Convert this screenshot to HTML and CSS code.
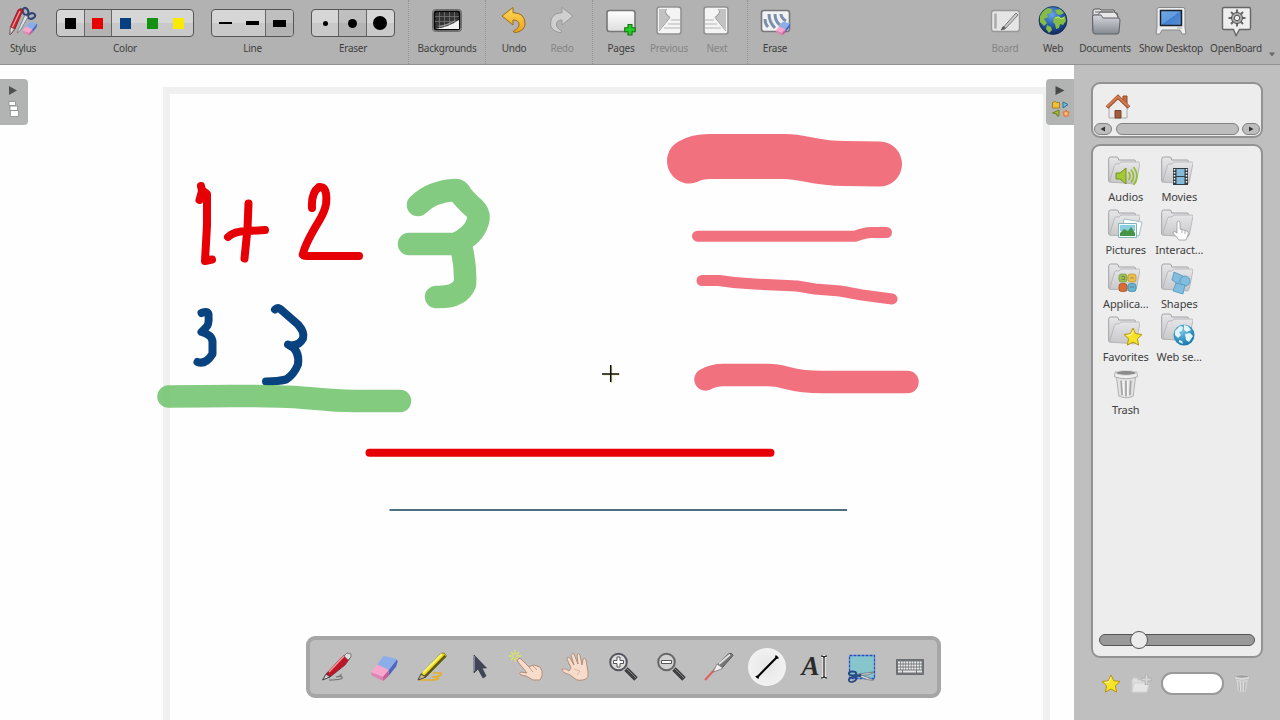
FILE: index.html
```html
<!DOCTYPE html>
<html lang="en">
<head>
  <meta charset="UTF-8">
  <meta name="viewport" content="width=device-width, initial-scale=1.0">
  <title>OpenBoard</title>
  <link rel="stylesheet" href="styles.css">
</head>
<body>
<!-- shared gradients and symbols -->
<svg class="defs" width="0" height="0">
  <defs>
    <linearGradient id="gWhite" x1="0" y1="0" x2="0" y2="1"><stop offset="0" stop-color="#fff"/><stop offset="1" stop-color="#dedede"/></linearGradient>
    <linearGradient id="gFolder" x1="0" y1="0" x2="0" y2="1"><stop offset="0" stop-color="#e6e6e8"/><stop offset="1" stop-color="#c6c6c9"/></linearGradient>
    <linearGradient id="gSteel" x1="0" y1="0" x2="0" y2="1"><stop offset="0" stop-color="#d5d7dc"/><stop offset="1" stop-color="#858991"/></linearGradient>
    <linearGradient id="gGold" x1="0" y1="0" x2="0" y2="1"><stop offset="0" stop-color="#ffd95a"/><stop offset="1" stop-color="#eda21c"/></linearGradient>
    <linearGradient id="gBlue" x1="0" y1="0" x2="1" y2="1"><stop offset="0" stop-color="#75a9e8"/><stop offset=".5" stop-color="#6099df"/><stop offset=".5" stop-color="#427fcb"/><stop offset="1" stop-color="#5991d9"/></linearGradient>
    <radialGradient id="gGlobe" cx=".45" cy=".3" r=".7"><stop offset="0" stop-color="#6ba6e6"/><stop offset=".5" stop-color="#2860b0"/><stop offset="1" stop-color="#10285e"/></radialGradient>
    <radialGradient id="gSky" cx=".4" cy=".3" r=".7"><stop offset="0" stop-color="#75c5e5"/><stop offset="1" stop-color="#1678aa"/></radialGradient>
    <symbol id="folder" viewBox="0 0 32 30">
      <path d="M.7 3.500Q.7 1 2.500 1H9q1.500 0 1.700 3h15.500q1.300 0 1.300 1.500V26H1.500L.7 25z" fill="url(#gFolder)" stroke="#a2a2a5"/>
      <path d="M6.500 9.500Q6.700 8 8 8h3l2-2h17.500q1.600 0 1.400 1.500L28.500 25 27 28 1.500 26z" fill="url(#gFolder)" stroke="#b1b1b4" stroke-width=".8"/>
    </symbol>
    <symbol id="star" viewBox="0 0 20 20">
      <path d="M10 1l2.700 5.700 6.300.8-4.600 4.300 1.200 6.300L10 15l-5.600 3.100 1.200-6.300L1 7.500l6.300-.8z" fill="#f8e426" stroke="#b7960c" stroke-linejoin="round"/>
      <path d="M10 3.500L8.200 7.800l-4.500.7" fill="none" stroke="#fff9b5"/>
    </symbol>
    <symbol id="bin" viewBox="0 0 26 32">
      <path d="M3 7h20l-2.600 21q-7 3.500-14.800 0z" fill="#e2e2e2" stroke="#b0b0b0"/>
      <path d="M8 12l1 15M13 12v16M18 12l-1 15" stroke="#a5a5a5" stroke-width="1.800"/>
      <path d="M9.800 12l1 15M14.800 12v16" stroke="#fff" stroke-width="1"/>
      <path d="M2 3h22l1 5q-12 4-24 0z" fill="#f1f1f1" stroke="#aaa"/>
      <ellipse cx="13" cy="4" rx="10.500" ry="2.500" fill="#8b8b8b" stroke="#ddd"/>
    </symbol>
    <symbol id="eraserIcon" viewBox="0 0 30 30">
      <path d="M2 20L13 6.500l15 2L14.500 25z" fill="#f6a7cb"/>
      <path d="M8.500 12l5.500-7.500q1-1.500 3-1.200L28 6q1.500.5.800 1.500L20.500 17.500z" fill="#8caee6"/>
      <path d="M20.500 17.500L28.800 7q1 .8.700 2.300L28 14l-8 10z" fill="#4d66c3"/>
      <path d="M14.500 24.500l6-7-.5 6.500-5.500 5z" fill="#c65f99"/>
      <path d="M2 20l12.500 4.500v4.500L3 23.500z" fill="#de86b3"/>
    </symbol>
  </defs>
</svg>

<header class="toolbar">
  <div class="tool tool-stylus">
    <svg class="icon" viewBox="0 0 32 32">
      <g fill="none" stroke="#344678" stroke-width="2.200"><ellipse cx="18.500" cy="6.500" rx="2.700" ry="3.700" transform="rotate(-25 18.500 6.500)"/><ellipse cx="24.500" cy="11" rx="3.700" ry="2.700" transform="rotate(-15 24.500 11)"/></g>
      <path d="M18 10l3 2-8 14-3 2 2-5z" fill="#d9e0e6" stroke="#717780" stroke-width=".8"/>
      <path d="M11 5q3-3 5 0L8 24l-5 6 .4-8z" fill="#cc1e2c" stroke="#782027" stroke-width=".8"/>
      <path d="M13 6L5.500 22" stroke="#ff9c9c" stroke-width="1.300"/>
      <path d="M3.400 22l4 2L3 30z" fill="#ddd" stroke="#666" stroke-width=".7"/>
      <use href="#eraserIcon" x="14" y="15" width="17" height="16"/>
    </svg>
    <span>Stylus</span>
  </div>
  <div class="choice choice-color">
    <div class="segments">
      <i><b class="swatch black"></b></i><i class="selected"><b class="swatch red"></b></i><i><b class="swatch blue"></b></i><i><b class="swatch green"></b></i><i><b class="swatch yellow"></b></i>
    </div>
    <span>Color</span>
  </div>
  <div class="choice choice-line">
    <div class="segments">
      <i><b class="stroke thin"></b></i><i><b class="stroke medium"></b></i><i class="selected"><b class="stroke thick"></b></i>
    </div>
    <span>Line</span>
  </div>
  <div class="choice choice-eraser">
    <div class="segments">
      <i><b class="dot small"></b></i><i class="selected"><b class="dot middle"></b></i><i><b class="dot large"></b></i>
    </div>
    <span>Eraser</span>
  </div>
  <div class="group group-background">
    <div class="tool tool-wide">
      <svg class="icon" viewBox="0 0 32 32">
        <rect x="1.500" y="4.500" width="29" height="22" rx="3" fill="#888" stroke="#707070"/>
        <rect x="3.500" y="6.500" width="25" height="18" rx="1.500" fill="#343434" stroke="#080808" stroke-width="1.500"/>
        <path d="M8.500 7v17M13.500 7v17M18.500 7v17M23.500 7v17M4 11.500h24M4 16.500h24" stroke="#757575" stroke-width=".8"/>
        <path d="M4 24q14-2 24-9v9z" fill="#f1f1f1"/><path d="M6 21q10-1 20-7-6 6-16 8z" fill="#999"/>
      </svg>
      <span>Backgrounds</span>
    </div>
  </div>
  <div class="group">
    <div class="tool">
      <svg class="icon" viewBox="0 0 32 32"><path d="M4 11L15 2.500v5.200q12 0 12 11.300 0 6-8.500 8.500-3 .5-3-1.500 6-3 5.500-7-.5-4-6-4v5z" fill="url(#gGold)" stroke="#996b18" stroke-linejoin="round"/></svg>
      <span>Undo</span>
    </div>
    <div class="tool disabled">
      <svg class="icon" viewBox="0 0 32 32"><path d="M27 11L16 2.500v5.200Q4.500 8 4.500 19q0 6 8.500 8.500 3 .5 3-1.500-6-3-5.500-7 .5-4 5.500-4v5z" fill="#cfcfcf" stroke="#999" stroke-linejoin="round"/></svg>
      <span>Redo</span>
    </div>
  </div>
  <div class="group">
    <div class="tool">
      <svg class="icon" viewBox="0 0 32 32">
        <rect x="2" y="5.500" width="28" height="21" rx="2.500" fill="url(#gWhite)" stroke="#777" stroke-width="1.600"/>
        <path d="M23 19.500h4v3.200h3.200v4H27V30h-4v-3.300h-3.300v-4H23z" fill="#25cf25" stroke="#157315" stroke-width="1.100"/>
      </svg>
      <span>Pages</span>
    </div>
    <div class="tool disabled">
      <svg class="icon" viewBox="0 0 32 32">
        <rect x="4" y="2" width="24" height="27" rx="2.500" fill="#f4f4f4" stroke="#929292" stroke-width="1.600"/>
        <path d="M6 4h7q-2 3 1 5l3 3L6 25z" fill="#c2c2c2"/><path d="M6 26l11-13.500L14 10q-3-3-.5-6" fill="none" stroke="#999"/>
        <path d="M18 15h9M15 19h12M11 23h16" stroke="#b5b5b5"/>
      </svg>
      <span>Previous</span>
    </div>
    <div class="tool disabled">
      <svg class="icon" viewBox="0 0 32 32">
        <rect x="3" y="2" width="24" height="27" rx="2.500" fill="#f4f4f4" stroke="#929292" stroke-width="1.600"/>
        <path d="M25 4h-7q2 3-1 5l-3 3 11 13z" fill="#c2c2c2"/><path d="M25 26L14 12.500l3-2.500q3-3 .5-6" fill="none" stroke="#999"/>
        <path d="M4 15h9M4 19h12M4 23h16" stroke="#b5b5b5"/>
      </svg>
      <span>Next</span>
    </div>
  </div>
  <div class="group group-erase">
    <div class="tool">
      <svg class="icon" viewBox="0 0 32 32">
        <rect x="2.500" y="5.500" width="28" height="21" rx="2.500" fill="#f1f2f4" stroke="#777" stroke-width="1.600"/>
        <path d="M6 14q0 5 3 8M10 9q0 8 6 14M16 9q0 7 5 11M22 9q0 4 5 7" stroke="#7c90ac" stroke-width="3" fill="none"/>
        <use href="#eraserIcon" x="15" y="15" width="17" height="16"/>
      </svg>
      <span>Erase</span>
    </div>
  </div>
  <nav class="modes">
    <div class="tool disabled">
      <svg class="icon" viewBox="0 0 32 32">
        <rect x="2.500" y="5.500" width="28" height="21" rx="2.500" fill="#e5e5e5" stroke="#999" stroke-width="1.400"/>
        <path d="M6.500 8.500v15" stroke="#aaa" stroke-width="2.500"/><path d="M12 25L27 8l2 2-13 14z" fill="#ccc" stroke="#777"/><path d="M12 25l2-4 3 2z" fill="#555"/>
      </svg>
      <span>Board</span>
    </div>
    <div class="tool">
      <svg class="icon" viewBox="0 0 32 32">
        <circle cx="16" cy="15.500" r="14" fill="url(#gGlobe)" stroke="#183057" stroke-width=".8"/>
        <path d="M3 11q3-6 8-8l4 1-1 4-4 1 1 3-4 2 3 4-3 3-4-4zM10 20l4 2 1 3-3 3-3-4zM18 5l5-1 4 4-4 2-3-1zM17 13l4-2 3 2 4-2 1 5-3 4-3-1-1 4-3 1-1-5-2-2z" fill="#84bd42"/>
        <path d="M18 13l4-1 2 2 3-1" stroke="#c0e66b" fill="none"/>
      </svg>
      <span>Web</span>
    </div>
    <div class="tool tool-documents">
      <svg class="icon icon-documents" viewBox="0 0 32 32">
        <path d="M3 8V5l2-1h5l1 1h13l1 3h2l1 4v14H3z" fill="#e8e8e8" stroke="#555"/><path d="M4 10h4l2-3h13M5 7h20M26 8l2 4" stroke="#666" fill="none"/>
        <path d="M2.500 12q0-2 2-2H11l2 3h15q2 0 2 2l-1 12q0 2-2 2H5q-2 0-2-2z" fill="url(#gSteel)" stroke="#5d6066"/>
      </svg>
      <span>Documents</span>
    </div>
    <div class="tool tool-wide">
      <svg class="icon" viewBox="0 0 32 32">
        <path d="M4 2.500h24q2 0 2 2V22l1 7h-4l-2-4H7l-2 4H1l1-7V4.500q0-2 2-2z" fill="#eee" stroke="#888"/>
        <rect x="5.500" y="5.500" width="21" height="15" fill="url(#gBlue)" stroke="#18202b" stroke-width="1.500"/><path d="M22 23h5" stroke="#aaa"/>
      </svg>
      <span>Show Desktop</span>
    </div>
    <div class="tool tool-openboard">
      <svg class="icon" viewBox="0 0 32 32">
        <path d="M4 2.500h25q1.500 0 1.500 1.500v19q0 1.500-1.500 1.500H19.500L16 30.500 13.500 24.500H4q-1.500 0-1.500-1.500V4q0-1.500 1.500-1.500z" fill="#eee" stroke="#666" stroke-width="1.400"/>
        <path d="M17 4.500v17M8.500 13h17M11 7l12 12M23 7L11 19" stroke="#666" stroke-width="2"/>
        <circle cx="17" cy="13" r="5.500" fill="#aaa" stroke="#555"/><circle cx="17" cy="13" r="2.700" fill="#eee" stroke="#555"/>
      </svg>
      <span>OpenBoard</span>
    </div>
    <svg class="more" viewBox="0 0 8 5"><path d="M1 .5h6L4 4.500z" fill="#666"/></svg>
  </nav>
</header>

<main class="workspace">
  <section class="board">
    <svg class="canvas" viewBox="0 65 1074 655">
      <path class="page-edge" d="M166.500 724V90.500H1046.500V724"/>
      <g class="ink red">
        <path d="M201 186l1 5-2.500 9M203 191l4 3V225l-2 36 7-1.500"/>
        <path d="M248.500 203.500l-1 25-3 30M228 237q6-6 20-6l17-1"/>
        <path d="M312 208q-1-15 7-21 9-1 7 17-1 7-7 17-14 23-16 33-1 2 4 2h52"/>
        <path d="M369.500 452.800H770.500"/>
      </g>
      <g class="ink blue">
        <path d="M201.500 313q7-3 7 2 1 10-3 13l-4 4q11 3 11 10v12q-7 11-15 8"/>
        <path d="M275 309.500q3-3 7 1l16 14q7 8 5 14-5 9-15 6 12 5 10 20-4 10-12 15-8 2-20 2"/>
      </g>
      <g class="marker green">
        <path d="M418 205q14-14 38-15 3 0 6 6 8 9 12 12 6 6 4 13-4 15-23 23H409M461 246q5 20 4 38-6 14-29 13"/>
        <path d="M168.500 396.500q70-1 112 0c25 0 45 5 78 4.500h41.500"/>
      </g>
      <g class="marker pink">
        <path class="w45" d="M689.500 161q8-4.500 20-4.500h75c20 0 30 7 60 7l35 .5"/>
        <path class="w11" d="M697.500 236.200H855q10-3.500 16-3.700h15.500"/>
        <path class="w11" d="M702 280.500h17q18 3 35 3.500l43 2 18 3 25 2 22 4 30 4"/>
        <path class="w22" d="M705.500 379.500q8-4.500 18-4.500h44c20 0 20 7 55 7h85"/>
      </g>
      <path class="thin-line" d="M389.500 510H847"/>
      <path d="M611.500 366v17M603 374.500h17" stroke="#d6d58b" stroke-width="1.500"/>
      <path d="M610.700 365v17M602 374h17" stroke="#111" stroke-width="1.500"/>
    </svg>

    <div class="tab tab-left">
      <svg viewBox="0 0 28 46"><path d="M9 7v9l8-4.500z" fill="#505050"/><g fill="#fff" stroke="#8b8b8b" stroke-width=".8"><path d="M9 22.500h6.500v4H9zM10 27h7.500v4.500H10zM10.500 31.500h8v6h-8z"/></g></svg>
    </div>
    <div class="tab tab-right">
      <svg viewBox="0 0 28 46"><path d="M9.500 7v9l9-4.500z" fill="#484848"/><path d="M6.500 23.500l3-1 1 1h3v5.500h-7z" fill="#eec03d" stroke="#a98118"/><path d="M17 23v6l5-3.500z" fill="#72bad7" stroke="#287697"/><path d="M13 31v6h-2v-2L6.500 34z" fill="#a9bb39" stroke="#71801e"/><path d="M20 31l1 2h2l-1 2v2h-4v-2l-1-2h2z" fill="#ffbb76" stroke="#e46d22"/></svg>
    </div>

    <div class="palette">
      <div class="pick"><svg viewBox="0 0 32 32"><path d="M8 29q15 0 13-3-1-1-6 0 6-1 5-3" fill="none" stroke="#6f6f6f" stroke-width="1.200"/><path d="M5 23L22 5l5-2q3 0 2 4L24 14 9 26z" fill="#be1528" stroke="#6d2730" stroke-width=".8"/><path d="M8 21L23 5" stroke="#ff9aa0" stroke-width="1.400"/><path d="M23 5l3-3 4 1v3l-3 3z" fill="#ddd" stroke="#666" stroke-width=".8"/><path d="M1.500 29L5 23l4 3z" fill="#ccc" stroke="#444"/></svg></div>
      <div class="pick"><svg class="eraser" viewBox="0 0 32 32"><use href="#eraserIcon" x="0" y="1" width="31" height="31"/></svg></div>
      <div class="pick"><svg viewBox="0 0 32 32"><path d="M3 29h14q8-1 4-3h-5q10 0 9-4h-8" fill="none" stroke="#e6af25" stroke-width="1.700"/><path d="M5 23L25 2.500q2-1.500 4 .5t1 3L10 26z" fill="#e5d51b" stroke="#67610c" stroke-width=".7"/><path d="M30 5.500L10 26l-2-1L28.500 4z" fill="#5b5215"/><path d="M7 22L26 3" stroke="#fff66f" stroke-width="2"/><path d="M2 29l3-6 5 3z" fill="#ccc07d" stroke="#444"/></svg></div>
      <div class="pick"><svg viewBox="0 0 32 32"><path d="M10 4v18l4-4 5 9 3-2-4-8h4.500z" fill="#414557" stroke="#333849" stroke-width=".7"/><path d="M10.300 5v15" stroke="#8f98ac"/></svg></div>
      <div class="pick"><svg class="touch" viewBox="0 0 40 36"><path d="M8 1v12M2 7h12M4 3l8 8M12 3l-8 8" stroke="#dce65c" stroke-width="1.300"/><circle cx="8" cy="7" r="2" fill="#c3c3b8"/><path d="M11 10q2-2 4 1l7 7 2-1 3-1 3 1 3 1 2 4v5l-2 4h-7l-7-4-5-1q-3-2 0-3l6 1-9-11q-1-1 0-3z" fill="#f8dccb" stroke="#b58d79"/><path d="M22 18l4 5M26 17l4 4" stroke="#c9a28e" fill="none"/></svg></div>
      <div class="pick"><svg viewBox="0 0 32 32"><path d="M11 17L7 8q0-3 3-1l4 7-3-10q1-3 3-1l4 10-1-9q2-3 3 0l2 10 1-6q2-2 3 1l2 12q1 5-2 7-8 3-12-1-4-4-9-5-4-2-3-4 4-1 7 2z" fill="#f8dccb" stroke="#ac8975" stroke-width=".9"/><path d="M14 18l6 2-3 4" fill="none" stroke="#dbb8a5"/></svg></div>
      <div class="pick"><svg viewBox="0 0 32 32"><path d="M19 18l10 10" stroke="#3e3e40" stroke-width="5"/><path d="M20 18l9 9" stroke="#888" stroke-width="1"/><circle cx="11.500" cy="11" r="8.300" fill="#ddd" stroke="#555560" stroke-width="2"/><path d="M10 6h3v3.500h3.500v3H13V16h-3v-3.500H6.500v-3H10z" fill="#fff" stroke="#555"/></svg></div>
      <div class="pick"><svg viewBox="0 0 32 32"><path d="M19 18l10 10" stroke="#3e3e40" stroke-width="5"/><path d="M20 18l9 9" stroke="#888" stroke-width="1"/><circle cx="11.500" cy="11" r="8.300" fill="#d0d0d0" stroke="#666" stroke-width="2"/><path d="M6.500 9.500h10v3h-10z" fill="#fff" stroke="#555"/></svg></div>
      <div class="pick"><svg viewBox="0 0 32 32"><path d="M2 29l12-13" stroke="#dc625f" stroke-width="2"/><path d="M14 14L26 2.500q3-1 4 2L19 17z" fill="#777" stroke="#555"/><path d="M16 13L27 3.500" stroke="#e5e5e5" stroke-width="1.800"/><path d="M14 13l6 4-4 2-6 2z" fill="#eee" stroke="#777" stroke-width=".8"/></svg></div>
      <div class="pick active"><svg viewBox="0 0 32 32"><path d="M5 27.500L27 5" stroke="#000" stroke-width="2.200"/><circle cx="5" cy="27.500" r="2.300"/><circle cx="27" cy="5" r="2.300"/></svg></div>
      <div class="pick text-tool"><span>A</span><svg viewBox="0 0 8 24"><path d="M1 1q3 0 3 2 0-2 3-2M4 2v20M1 23q3 0 3-2 0 2 3 2" fill="none" stroke="#fff" stroke-width="3"/><path d="M1 1q3 0 3 2 0-2 3-2M4 2v20M1 23q3 0 3-2 0 2 3 2" fill="none" stroke="#222" stroke-width="1.300"/></svg></div>
      <div class="pick"><svg viewBox="0 0 32 32"><path d="M3.500 4.500h25v23h-25z" fill="#85c5cb" stroke="#234fc5" stroke-width="1.300" stroke-dasharray="3 1"/><path d="M12 23l16-2q-5 4-16 3M13 23l15 6q-6 1-15-4" fill="#ddd" stroke="#657080" stroke-width=".8"/><g fill="none" stroke="#294782" stroke-width="1.800"><ellipse cx="6.500" cy="22.500" rx="3.700" ry="2"/><ellipse cx="6.500" cy="28.500" rx="3.700" ry="2.200" transform="rotate(-20 6.500 28.500)"/><path d="M10 23.500l5 2M9 26.500l6-3"/></g></svg></div>
      <div class="pick"><svg viewBox="0 0 32 32"><path d="M2.500 8.500h27v15h-27z" fill="#707577" stroke="#6a6e71"/><path d="M4 11.500h24M4 14.500h24M4 17.500h24" stroke="#ededed" stroke-width="2" stroke-dasharray="2 .7"/><path d="M4 20.500h4M9 20.500h13M23 20.500h5" stroke="#e5e5e5" stroke-width="2"/></svg></div>
    </div>
  </section>

  <aside class="library">
    <div class="path-panel">
      <svg class="home" viewBox="0 0 26 28"><path d="M4 13v12h18V13l-9-9z" fill="#ececec" stroke="#aaa"/><path d="M18 3h4v9l-4-4z" fill="#c66e45" stroke="#8b492b"/><path d="M2 14.500L13 4l11 10.500" fill="none" stroke="#92502f" stroke-width="3.800"/><path d="M2 14L13 3.700 24 14" fill="none" stroke="#da7b4d" stroke-width="2"/><path d="M10 17.500h6V25h-6z" fill="#a45d3b" stroke="#71462f"/></svg>
      <div class="scrollbar">
        <span class="arrow"><svg viewBox="0 0 6 6"><path d="M5 .5v5L.5 3z"/></svg></span><span class="track"></span><span class="arrow"><svg viewBox="0 0 6 6"><path d="M1 .5v5L5.500 3z"/></svg></span>
      </div>
    </div>
    <div class="library-panel">
      <div class="folders">
        <div class="folder"><svg viewBox="0 0 36 32"><use href="#folder" width="32" height="30"/><path d="M8 17h4l6-5v16l-6-5H8z" fill="#a5c936" stroke="#73921e"/><path d="M20.500 16q3 4 0 8M23 13.500q5 6.500 0 13M25.500 11q7 9 0 18" fill="none" stroke="#96be30" stroke-width="1.700"/></svg><span>Audios</span></div>
        <div class="folder"><svg viewBox="0 0 36 32"><use href="#folder" width="32" height="30"/><path d="M12 12h15v17H12z" fill="#343b41"/><path d="M15.500 13h8v7h-8zM15.500 21h8v7h-8z" fill="#83bddb"/><path d="M13.500 13v15M25.500 13v15" stroke="#fff" stroke-width="1.500" stroke-dasharray="1.500 1.500"/></svg><span>Movies</span></div>
        <div class="folder"><svg viewBox="0 0 36 32"><use href="#folder" width="32" height="30"/><path d="M16 10l18 3-3 14-17-3z" fill="#fff" stroke="#8bb4bd" stroke-width=".8"/><path d="M10.500 14.500h18v14h-18z" fill="#eff" stroke="#86b3b9"/><path d="M12 16h15v6H12z" fill="#8bcde1"/><path d="M12 24l4-4 4 2 3-4 4 6v3H12z" fill="#469447"/></svg><span>Pictures</span></div>
        <div class="folder"><svg viewBox="0 0 36 32"><use href="#folder" width="32" height="30"/><path d="M16 13q1-2 3 0v7l7 2q2 1 1 4l-2 5h-7l-6-7q0-3 4 0z" fill="#fff" stroke="#999" stroke-width=".8"/><path d="M21 21v3M24 22v3" stroke="#aaa"/></svg><span>Interact...</span></div>
        <div class="folder"><svg viewBox="0 0 36 32"><use href="#folder" width="32" height="30"/><g stroke-width=".8"><rect x="11" y="11" width="8" height="8" rx="2.500" fill="#9bc24b" stroke="#779838"/><rect x="20" y="11" width="8" height="8" rx="2.500" fill="#eac04a" stroke="#bd932c"/><rect x="11" y="20.500" width="8" height="8" rx="2.500" fill="#d86e36" stroke="#a84e20"/><rect x="20" y="20.500" width="8" height="8" rx="2.500" fill="#63b5d2" stroke="#3a8cae"/></g><path d="M13.500 13.500h3v3h-3M22.500 15h3M22 24h4" fill="none" stroke="#666" stroke-width=".7"/></svg><span>Applica...</span></div>
        <div class="folder"><svg viewBox="0 0 36 32"><use href="#folder" width="32" height="30"/><g fill="#82bddf" stroke="#4f96bf" stroke-width=".8"><path d="M13 9l9 4-5 8-6-4z"/><circle cx="24" cy="18" r="5"/><path d="M15 20l9 2-2 9-10-3z"/></g></svg><span>Shapes</span></div>
        <div class="folder"><svg viewBox="0 0 36 32"><use href="#folder" width="32" height="30"/><use href="#star" x="15" y="11" width="20" height="20"/></svg><span>Favorites</span></div>
        <div class="folder"><svg viewBox="0 0 36 32"><g transform="translate(0 -3)"><use href="#folder" width="32" height="30"/></g><circle cx="23" cy="19" r="10.500" fill="url(#gSky)"/><path d="M14 15l5-5 3 1-1 4-3 1 2 3-3 3-3-3zM23 9l4 1 3 4-4 2-3-2zM24 18l5-1 3 3-4 6-3-2zM18 24l3 1 1 3-4-2z" fill="#e2f5fb"/></svg><span>Web se...</span></div>
        <div class="folder"><svg viewBox="0 0 36 32"><use href="#bin" x="4.500" y="0" width="27" height="31"/></svg><span>Trash</span></div>
      </div>
      <div class="slider"><span class="knob"></span></div>
    </div>
    <div class="library-actions">
      <svg class="action" viewBox="0 0 20 20"><use href="#star" width="20" height="20"/></svg>
      <svg class="action new-folder" viewBox="0 0 22 22"><path d="M2 7l1-2h4l1 2h7l1 2v10H2z" fill="#dedede" stroke="#c9c9c9"/><path d="M4 10h15l-2 9H2z" fill="#e5e5e5" stroke="#d1d1d1"/><path d="M16.500 1v11M11.500 6.500h10" stroke="#a9a9a9" stroke-width="3.500"/><path d="M16.500 1.500v10M12 6.500h9" stroke="#d5d5d5" stroke-width="2"/></svg>
      <input class="search" type="text" aria-label="Search">
      <svg class="action faded" viewBox="0 0 20 20"><use href="#bin" x="1" width="18" height="20"/></svg>
    </div>
  </aside>
</main>
</body>
</html>
```

FILE: styles.css
```css
* {
  box-sizing: border-box;
}
body {
  margin: 0;
  width: 1280px;
  height: 720px;
  overflow: hidden;
  font-family: "Noto Sans", "Open Sans", sans-serif;
  background: #fefefe;
  color: #404040;
}
svg {
  display: block;
}
.defs {
  position: absolute;
}

/* top toolbar */
.toolbar {
  display: flex;
  height: 65px;
  background: #b2b2b2;
  border-bottom: 1px solid #919191;
  font-size: 10px;
  letter-spacing: -0.25px;
}
.tool,
.choice {
  display: flex;
  flex-direction: column;
  align-items: center;
  flex: none;
  width: 48px;
  padding-top: 5px;
  white-space: nowrap;
}
.tool span,
.choice span {
  margin-top: 4px;
  line-height: 14px;
}
.icon {
  width: 32px;
  height: 32px;
}
.tool-stylus {
  width: 46px;
}
.tool-wide {
  width: 76px;
}
.tool-documents {
  width: 56px;
}
.icon-documents {
  position: relative;
  left: 1px;
}
.tool-openboard {
  width: 54px;
}
.disabled {
  color: #858585;
}
.choice {
  padding-top: 9px;
}
.choice-color {
  width: 138px;
  margin-left: 10px;
}
.choice-line {
  width: 83px;
  margin-left: 17px;
}
.choice-eraser {
  width: 84px;
  margin: 0 13px 0 17px;
}
.segments {
  display: flex;
  width: 100%;
  height: 28px;
  border: 1px solid #555;
  border-radius: 4px;
  background: linear-gradient(#d6d6d6 0 50%, #c9c9c9 50% 100%);
}
.segments i {
  display: flex;
  flex: 1;
  align-items: center;
  justify-content: center;
}
.segments .selected {
  background: linear-gradient(#bfbfbf 0 50%, #b3b3b3 50% 100%);
  border-left: 1px solid #666;
  border-right: 1px solid #666;
}
.segments .selected:last-child {
  border-right: 0;
  border-radius: 0 3px 3px 0;
}
.swatch {
  width: 11px;
  height: 11px;
}
.choice-color .segments {
  padding-right: 1px;
}
.swatch.black { background: #000; }
.swatch.red { background: #e60000; }
.swatch.blue { background: #08407f; }
.swatch.green { background: #129210; }
.swatch.yellow { background: #f9ea00; }
.stroke {
  width: 13px;
  background: #000;
}
.thin { height: 2px; }
.medium { height: 4px; }
.thick { height: 7px; }
.dot {
  border-radius: 50%;
  background: #000;
}
.choice-eraser .segments {
  padding-right: 1px;
}
.small { width: 5px; height: 5px; }
.middle { width: 9px; height: 9px; }
.large { width: 14px; height: 14px; }
.group {
  display: flex;
  padding: 0 6px 0 4px;
  border-left: 1px dotted #959595;
}
.group-background {
  padding: 0;
}
.group-erase {
  padding-left: 3px;
}
.modes {
  display: flex;
  margin-left: auto;
}
.more {
  width: 8px;
  height: 5px;
  margin: 52px 4px 0 5px;
}

/* board */
.workspace {
  display: flex;
  height: 655px;
}
.board {
  position: relative;
  width: 1074px;
}
.canvas {
  width: 1074px;
  height: 655px;
  fill: none;
}
.page-edge {
  stroke: #f0f0f0;
  stroke-width: 7;
}
.ink {
  stroke-width: 8;
  stroke-linecap: round;
  stroke-linejoin: round;
}
.ink.red { stroke: #e60005; }
.ink.blue { stroke: #08437f; }
.marker {
  stroke-width: 22.5;
  stroke-linecap: round;
  stroke-linejoin: round;
}
.marker.green { stroke: #6fc36b; opacity: 0.86; }
.marker.pink { stroke: #f2717f; }
.w45 { stroke-width: 45; }
.w22 { stroke-width: 22.5; }
.w11 { stroke-width: 11; }
.thin-line {
  stroke: #4f7080;
  stroke-width: 2;
}
.tab {
  position: absolute;
  top: 14px;
  width: 28px;
  height: 46px;
  background: #b2b4b3;
}
.tab-left {
  left: 0;
  border-radius: 0 4px 4px 0;
}
.tab-right {
  right: 0;
  border-radius: 4px 0 0 4px;
}

/* floating stylus palette */
.palette {
  position: absolute;
  left: 306px;
  bottom: 22px;
  display: flex;
  width: 635px;
  height: 62px;
  padding: 0 3px 1px;
  border: 4px solid #a6a6a6;
  border-radius: 9px;
  background: #bfbfbf;
}
.pick {
  display: flex;
  flex: 1;
  align-items: center;
  justify-content: center;
}
.pick svg {
  width: 32px;
  height: 32px;
}
.pick .eraser {
  width: 30px;
  height: 30px;
  margin-right: 2px;
}
.pick .touch {
  width: 40px;
  height: 36px;
  margin-right: 2px;
  flex: none;
}
.active svg {
  width: 38px;
  height: 38px;
  padding: 4px;
  border-radius: 50%;
  background: radial-gradient(#e6e6e6, #f7f7f7);
}
.text-tool {
  font: italic bold 27px "Liberation Serif", serif;
  color: #2b2b2b;
}
.text-tool svg {
  width: 8px;
  height: 24px;
}

/* library */
.library {
  width: 206px;
  padding: 17px 17px 0;
  background: #bfbfbf;
}
.path-panel,
.library-panel {
  width: 172px;
  border: 2px solid #929292;
  border-radius: 9px;
  background: #ededed;
}
.path-panel {
  height: 56px;
}
.home {
  width: 26px;
  height: 28px;
  margin: 9px 0 0 12px;
}
.scrollbar {
  display: flex;
  justify-content: space-between;
  margin: 2px 1px 0;
}
.arrow,
.track {
  height: 12px;
  border: 1px solid #828282;
  border-radius: 6px;
  background: #bdbdbd;
}
.arrow {
  display: flex;
  align-items: center;
  justify-content: center;
  width: 18px;
}
.arrow svg {
  width: 6px;
  height: 6px;
  fill: #333;
}
.track {
  width: 123px;
}
.library-panel {
  display: flex;
  flex-direction: column;
  height: 514px;
  margin-top: 6px;
  padding: 10px 6px;
}
.folders {
  display: grid;
  grid-template-columns: 53.5px 53.5px;
  grid-auto-rows: 53.3px;
}
.folder {
  display: flex;
  flex-direction: column;
  align-items: center;
  font-size: 11px;
  letter-spacing: -0.1px;
  white-space: nowrap;
}
.folder svg {
  width: 36px;
  height: 32px;
  overflow: visible;
}
.folder span {
  margin-top: 1px;
  line-height: 15px;
}
.slider {
  width: 156px;
  height: 12px;
  margin-top: auto;
  border: 1px solid #555;
  border-radius: 6px;
  background: #999;
}
.knob {
  display: block;
  width: 18px;
  height: 18px;
  margin: -4px 0 0 30px;
  border: 1px solid #555;
  border-radius: 50%;
  background: #ececec;
}
.library-actions {
  display: flex;
  align-items: center;
  gap: 9px;
  margin-top: 14px;
  padding-left: 10px;
}
.action {
  width: 20px;
  height: 20px;
}
.new-folder {
  width: 22px;
  height: 22px;
}
.search {
  width: 63px;
  height: 23px;
  margin: 0 -1px 0 0;
  border: 2px solid #999;
  border-radius: 11px;
  background: #fff;
}
.faded {
  opacity: 0.65;
}
```
